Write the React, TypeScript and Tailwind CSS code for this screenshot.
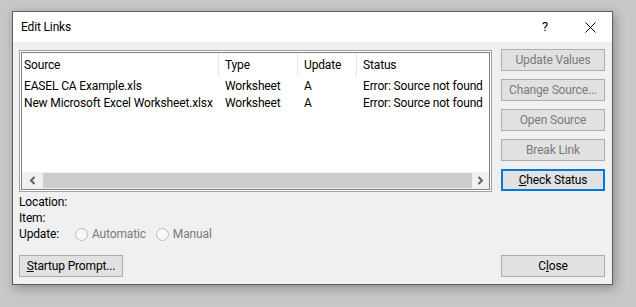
import React from 'react'

const LINKS = [
  { source: 'EASEL CA Example.xls', type: 'Worksheet', update: 'A', status: 'Error: Source not found' },
  { source: 'New Microsoft Excel Worksheet.xlsx', type: 'Worksheet', update: 'A', status: 'Error: Source not found' },
]

function Btn({ children, disabled, focused }: { children: React.ReactNode; disabled?: boolean; focused?: boolean }) {
  return (
    <button
      className={
        'h-[22px] w-[104px] flex items-center justify-center bg-[#e1e1e1] leading-none ' +
        (focused ? 'border-2 border-[#0078d7] ' : 'border border-[#adadad] ') +
        (disabled ? 'text-[#7a7a7a]' : 'text-black')
      }
    >
      {children}
    </button>
  )
}

function Radio({ label }: { label: string }) {
  return (
    <div className="flex items-center gap-[4px] text-[#7a7a7a]">
      <span className="shrink-0 w-[13px] h-[13px] rounded-full border border-[#bcbcbc] bg-[#f7f7f7]" />
      <span>{label}</span>
    </div>
  )
}

export default function App() {
  return (
    <div className="w-[636px] h-[307px] bg-[#c7c7c7] pl-[12px] pt-[11px] font-['Roboto',sans-serif] text-[12px] tracking-[-0.15px] text-black">
      <div className="w-[601px] h-[274px] border border-[#5c5c5c] bg-[#f0f0f0] flex flex-col shadow-[2px_3px_10px_rgba(0,0,0,0.3)]">
        {/* Title bar */}
        <div className="h-[30px] bg-white flex items-center pl-[8px]">
          <span>Edit Links</span>
          <span className="ml-auto text-[13px] w-[10px] text-center mr-[35px]">?</span>
          <svg width="11" height="11" viewBox="0 0 11 11" className="mr-[16px]">
            <path d="M0.5 0.5 L10.5 10.5 M10.5 0.5 L0.5 10.5" stroke="#000" strokeWidth="1" />
          </svg>
        </div>

        {/* Body */}
        <div className="flex-1 flex gap-[9px] pl-[6px] pr-[6px] pt-[7px] pb-[7px]">
          <div className="w-[473px] flex flex-col">
            {/* List */}
            <div className="mt-[1px] h-[142px] border border-[#a0a0a0] p-[1px] bg-white">
              <div className="h-full border border-[#828282] flex flex-col">
                <div className="h-[23px] flex items-center">
                  <div className="w-[197px] pl-[2px] h-full flex items-center border-r border-[#e5e5e5]">Source</div>
                  <div className="w-[79px] pl-[6px] h-full flex items-center border-r border-[#e5e5e5]">Type</div>
                  <div className="w-[59px] pl-[6px] h-full flex items-center border-r border-[#e5e5e5]">Update</div>
                  <div className="flex-1 pl-[6px] h-full flex items-center">Status</div>
                </div>
                <div className="flex-1 pt-[1px]">
                  {LINKS.map((l, i) => (
                    <div key={i} className="h-[17px] flex items-center whitespace-nowrap">
                      <div className="w-[197px] pl-[2px]">{l.source}</div>
                      <div className="w-[79px] pl-[6px]">{l.type}</div>
                      <div className="w-[59px] pl-[6px]">{l.update}</div>
                      <div className="flex-1 pl-[6px]">{l.status}</div>
                    </div>
                  ))}
                </div>
                {/* Horizontal scrollbar */}
                <div className="h-[17px] flex bg-[#f0f0f0]">
                  <div className="w-[21px] flex items-center justify-center">
                    <svg width="7" height="9" viewBox="0 0 7 9">
                      <path d="M5.5 1 L2 4.5 L5.5 8" stroke="#606060" strokeWidth="2" fill="none" />
                    </svg>
                  </div>
                  <div className="flex-1 bg-[#cdcdcd] my-[1px]" />
                  <div className="w-[17px] flex items-center justify-center">
                    <svg width="7" height="9" viewBox="0 0 7 9">
                      <path d="M1.5 1 L5 4.5 L1.5 8" stroke="#606060" strokeWidth="2" fill="none" />
                    </svg>
                  </div>
                </div>
              </div>
            </div>

            {/* Details */}
            <div className="mt-[2px] leading-[16px]">
              <div>Location:</div>
              <div>Item:</div>
              <div className="flex items-center">
                <span className="shrink-0 w-[56px]">Update:</span>
                <Radio label="Automatic" />
                <div className="ml-[10px]">
                  <Radio label="Manual" />
                </div>
              </div>
            </div>

            <div className="mt-auto">
              <Btn>
                <span><span className="underline">S</span>tartup Prompt...</span>
              </Btn>
            </div>
          </div>

          {/* Buttons */}
          <div className="w-[104px] flex flex-col gap-[8px]">
            <Btn disabled>Update Values</Btn>
            <Btn disabled>Change Source...</Btn>
            <Btn disabled>Open Source</Btn>
            <Btn disabled>Break Link</Btn>
            <Btn focused>
              <span><span className="underline">C</span>heck Status</span>
            </Btn>
            <div className="mt-auto">
              <Btn>
                <span>C<span className="underline">l</span>ose</span>
              </Btn>
            </div>
          </div>
        </div>
      </div>
    </div>
  )
}
